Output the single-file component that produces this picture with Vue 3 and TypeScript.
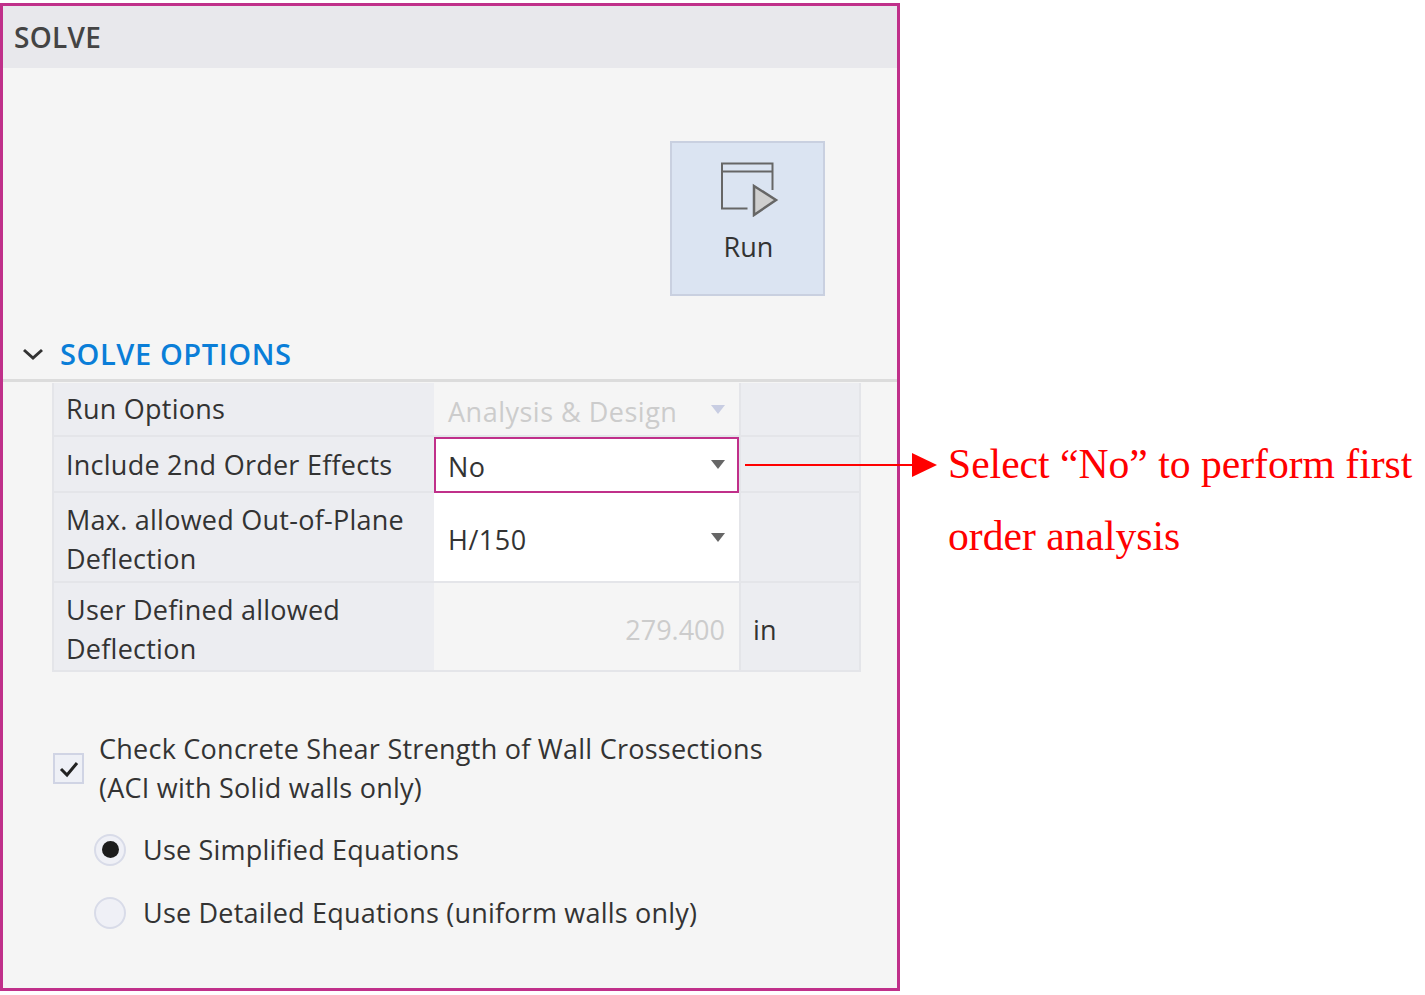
<template>
  <div class="page">
    <section class="panel">
      <header class="panel-head">SOLVE</header>

      <div class="run-row">
        <button class="run-btn">
          <svg class="run-icon" width="60" height="56" viewBox="0 0 60 56">
            <path d="M52.5 29V2.5H2V47.5H27.5M2 10.5H52.5" fill="none" stroke="#666" stroke-width="2" />
            <path d="M34 25L56 39L34 54Z" fill="#cfcfcf" stroke="#666" stroke-width="2.5" />
          </svg>
          <span>Run</span>
        </button>
      </div>

      <div class="section-head">
        <svg width="22" height="14" viewBox="0 0 22 14">
          <path d="M2 3L11 11L20 3" fill="none" stroke="#333" stroke-width="3" />
        </svg>
        <span class="section-title">SOLVE OPTIONS</span>
      </div>

      <div class="grid">
        <template v-for="row in rows" :key="row.label">
          <div class="cell label" :class="row.cls">{{ row.label }}</div>
          <div class="cell value" :class="[row.kind, row.cls, { hilite: row.hilite }]">
            <span class="value-text">{{ row.value }}</span>
            <span v-if="row.kind !== 'number'" class="caret"></span>
          </div>
          <div class="cell unit" :class="row.cls">{{ row.unit }}</div>
        </template>
      </div>

      <div class="check-row">
        <span class="checkbox">
          <svg width="22" height="18" viewBox="0 0 22 18">
            <path d="M3 9L9 15L19 3" fill="none" stroke="#222" stroke-width="3" />
          </svg>
        </span>
        <span class="check-text">Check Concrete Shear Strength of Wall Crossections<br />(ACI with Solid walls only)</span>
      </div>

      <div class="radios">
        <div v-for="r in radios" :key="r.label" class="radio-row">
          <span class="radio" :class="{ on: r.on }"></span>
          <span>{{ r.label }}</span>
        </div>
      </div>
    </section>

    <div class="callout">
      <svg class="arrow" width="192" height="28" viewBox="0 0 192 28">
        <path d="M0 14H170" stroke="#ff0000" stroke-width="2" />
        <path d="M167 2L192 14L167 26Z" fill="#ff0000" />
      </svg>
      <p class="note">Select “No” to perform first<br />order analysis</p>
    </div>
  </div>
</template>

<script setup lang="ts">
interface Row {
  label: string
  value: string
  unit: string
  kind: 'disabled' | 'select' | 'number'
  cls: string
  hilite?: boolean
}

const rows: Row[] = [
  { label: 'Run Options', value: 'Analysis & Design', unit: '', kind: 'disabled', cls: 'h-run' },
  { label: 'Include 2nd Order Effects', value: 'No', unit: '', kind: 'select', cls: 'h-second', hilite: true },
  { label: 'Max. allowed Out-of-Plane Deflection', value: 'H/150', unit: '', kind: 'select', cls: 'h-max' },
  { label: 'User Defined allowed Deflection', value: '279.400', unit: 'in', kind: 'number', cls: 'h-user' },
]

const radios = [
  { label: 'Use Simplified Equations', on: true },
  { label: 'Use Detailed Equations (uniform walls only)', on: false },
]
</script>

<style>
html, body { background: #ffffff; }
</style>

<style scoped>
.page {
  position: relative;
  width: 1425px;
  height: 995px;
  padding-top: 3px;
  box-sizing: border-box;
  font-family: "Open Sans", "Noto Sans", sans-serif;
  color: #333;
  overflow: hidden;
}
.panel {
  width: 900px;
  height: 988px;
  box-sizing: border-box;
  border: 3px solid #c0308a;
  background: #f5f5f5;
}
.panel-head {
  height: 62px;
  padding-left: 11px;
  background: #e8e8ec;
  font-size: 28px;
  font-weight: 600;
  line-height: 63px;
  color: #444;
  letter-spacing: 0.3px;
}
.run-row {
  display: flex;
  justify-content: flex-end;
  padding: 73px 72px 0 0;
}
.run-btn {
  width: 155px;
  height: 155px;
  box-sizing: border-box;
  border: 2px solid #c9d0e0;
  background: #dbe4f2;
  padding: 18px 0 0;
  display: flex;
  flex-direction: column;
  align-items: center;
  font: inherit;
  font-size: 27px;
  color: #333;
}
.run-icon { margin-left: 4px; }
.run-btn span { margin: 12px 0 0 2px; line-height: 36px; }
.section-head {
  display: flex;
  align-items: center;
  gap: 16px;
  height: 39px;
  margin-top: 38px;
  padding: 0 0 6px 19px;
  border-bottom: 3px solid #dcdcdc;
}
.section-title {
  font-size: 29px;
  font-weight: 600;
  color: #0a7ed8;
  letter-spacing: 0.6px;
  line-height: 46px;
}
.grid {
  display: grid;
  grid-template-columns: 382px 305px 122px;
  margin: 1px 0 0 49px;
}
.cell {
  box-sizing: border-box;
  border-bottom: 2px solid #e4e5e9;
  font-size: 27px;
  line-height: 39px;
  letter-spacing: 0.25px;
  color: #333;
}
.label {
  display: flex;
  align-items: center;
  padding: 0 12px;
  background: #ecedf1;
  border-left: 2px solid #e4e5e9;
}
.label.h-run { padding-bottom: 2px; }
.label.h-max, .label.h-user { padding-top: 4px; }
.unit {
  display: flex;
  align-items: center;
  padding: 6px 12px 0;
  background: #ecedf1;
  border-right: 2px solid #e4e5e9;
  border-left: 2px solid #e4e5e9;
}
.h-run { height: 54px; }
.h-second { height: 56px; }
.h-max { height: 90px; }
.h-user { height: 89px; }
.value {
  display: flex;
  align-items: center;
  justify-content: space-between;
  padding: 2px 14px 0;
  background: #ffffff;
  letter-spacing: 0.5px;
}
.value.h-run, .value.h-max { padding-top: 4px; }
.value.disabled, .value.number { background: #f5f5f5; color: #ccc; }
.value.number { justify-content: flex-end; padding-top: 6px; letter-spacing: 0; }
.value.hilite { border: 2px solid #c0308a; padding: 2px 12px 0; }
.caret {
  width: 0;
  height: 0;
  margin-bottom: 4px;
  border-left: 7px solid transparent;
  border-right: 7px solid transparent;
  border-top: 9px solid #666;
}
.disabled .caret { border-top-color: #c8cde2; }
.check-row {
  display: flex;
  align-items: center;
  gap: 15px;
  margin: 58px 0 0 50px;
  font-size: 27px;
  line-height: 38.5px;
  letter-spacing: 0.25px;
}
.checkbox {
  width: 31px;
  height: 31px;
  box-sizing: border-box;
  border: 2px solid #d0d4e4;
  background: #eef0f6;
  display: flex;
  align-items: center;
  justify-content: center;
}
.radios { margin: 11px 0 0 91px; }
.radio-row {
  display: flex;
  align-items: center;
  gap: 17px;
  height: 63px;
  font-size: 27px;
  letter-spacing: 0.2px;
}
.radio {
  width: 32px;
  height: 32px;
  box-sizing: border-box;
  border: 2px solid #d8dbe8;
  border-radius: 50%;
  background: #eff0f6;
  display: flex;
  align-items: center;
  justify-content: center;
}
.radio.on::after {
  content: "";
  width: 17px;
  height: 17px;
  border-radius: 50%;
  background: #1c1c1c;
}
.callout { position: absolute; left: 745px; top: 451px; }
.arrow { display: block; }
.note {
  position: absolute;
  left: 203px;
  top: -23px;
  margin: 0;
  width: 480px;
  font-family: "Liberation Serif", "Times New Roman", serif;
  font-size: 41.6px;
  line-height: 72px;
  color: #ff0000;
  white-space: nowrap;
}
</style>
